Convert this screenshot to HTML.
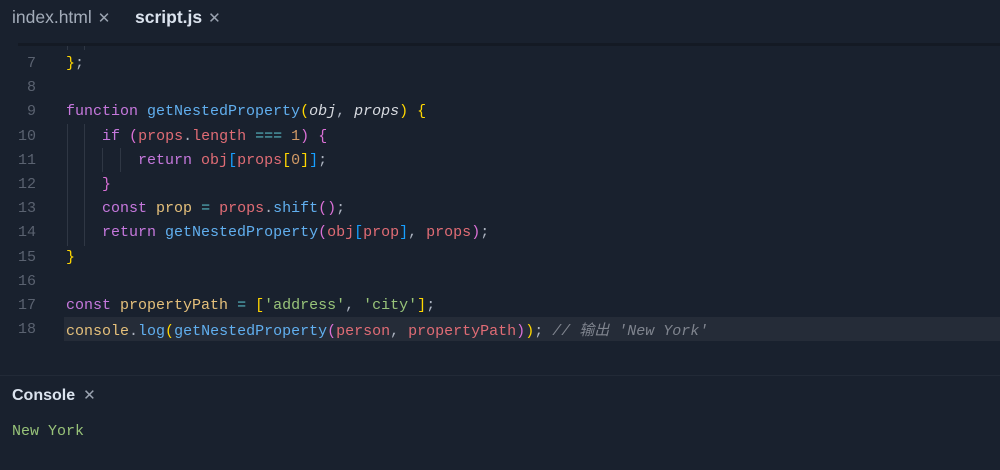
<!DOCTYPE html>
<html><head><meta charset="utf-8"><style>
body{margin:0;width:1000px;height:470px;background:#19212e;overflow:hidden;position:relative;font-family:"Liberation Mono",monospace;}
.tabs{position:absolute;top:0;left:0;width:1000px;height:44px;background:#19212e;font-family:"Liberation Sans",sans-serif;font-size:17.5px;}
.tab{position:absolute;top:7px;}
.x{color:#9aa3b0;font-size:15px;margin-left:6px;}
.shadow{position:absolute;top:43px;left:18px;right:0;height:3px;background:#141a24;}
.ln{position:absolute;left:0;width:36px;text-align:right;color:#5a6270;font-size:15px;line-height:24.2px;}
.code{position:absolute;left:66px;font-size:15px;line-height:24.2px;color:#abb2bf;white-space:pre;}
.row{height:24.2px;}
.g{position:absolute;width:1px;background:#2f3744;}
.k{color:#c678dd}.f{color:#61afef}.p{color:#d7dae0;font-style:italic}.v{color:#e06c75}.c{color:#e5c07b}.n{color:#d19a66}.o{color:#56b6c2}.s{color:#98c379}.cm{color:#7f848e;font-style:italic}
.b1{color:#ffd700}.b2{color:#da70d6}.b3{color:#179fff}
.hl{position:absolute;left:64px;right:0;top:317px;height:24px;background:#252c38;}
.sep{position:absolute;top:375px;left:0;right:0;height:1px;background:#222a37;}
</style></head><body>
<div class="tabs">
<span class="tab" style="left:12px;color:#a3acb9">index.html<span class="x">✕</span></span>
<span class="tab" style="left:135px;color:#dbe3ee;font-weight:bold">script.js<span class="x" style="font-weight:normal">✕</span></span>
</div>
<div class="hl"></div>
<div class="g" style="left:67px;top:46px;height:4px"></div>
<div class="g" style="left:84px;top:46px;height:4px"></div>
<div class="g" style="left:67px;top:124px;height:122px"></div>
<div class="g" style="left:84px;top:124px;height:122px"></div>
<div class="g" style="left:102px;top:148px;height:24px"></div>
<div class="g" style="left:120px;top:148px;height:24px"></div>
<div class="shadow"></div>
<div class="ln" style="top:52px">7<br>8<br>9<br>10<br>11<br>12<br>13<br>14<br>15<br>16<br>17<br>18</div>
<div class="code" style="top:52px"><div class="row"><span class="b1">}</span>;</div><div class="row"> </div><div class="row"><span class="k">function</span> <span class="f">getNestedProperty</span><span class="b1">(</span><span class="p">obj</span>, <span class="p">props</span><span class="b1">)</span> <span class="b1">{</span></div><div class="row">    <span class="k">if</span> <span class="b2">(</span><span class="v">props</span>.<span class="v">length</span> <span class="o">===</span> <span class="n">1</span><span class="b2">)</span> <span class="b2">{</span></div><div class="row">        <span class="k">return</span> <span class="v">obj</span><span class="b3">[</span><span class="v">props</span><span class="b1">[</span><span class="n">0</span><span class="b1">]</span><span class="b3">]</span>;</div><div class="row">    <span class="b2">}</span></div><div class="row">    <span class="k">const</span> <span class="c">prop</span> <span class="o">=</span> <span class="v">props</span>.<span class="f">shift</span><span class="b2">()</span>;</div><div class="row">    <span class="k">return</span> <span class="f">getNestedProperty</span><span class="b2">(</span><span class="v">obj</span><span class="b3">[</span><span class="v">prop</span><span class="b3">]</span>, <span class="v">props</span><span class="b2">)</span>;</div><div class="row"><span class="b1">}</span></div><div class="row"> </div><div class="row"><span class="k">const</span> <span class="c">propertyPath</span> <span class="o">=</span> <span class="b1">[</span><span class="s">'address'</span>, <span class="s">'city'</span><span class="b1">]</span>;</div><div class="row"><span class="c">console</span>.<span class="f">log</span><span class="b1">(</span><span class="f">getNestedProperty</span><span class="b2">(</span><span class="v">person</span>, <span class="v">propertyPath</span><span class="b2">)</span><span class="b1">)</span>; <span class="cm">// <span style="font-family:'Noto Sans CJK SC',sans-serif">输出</span> 'New York'</span></div></div>
<div class="sep"></div>
<div style="position:absolute;top:386px;left:12px;font-family:'Liberation Sans',sans-serif;font-size:16px;font-weight:bold;color:#dbe3ee">Console<span class="x" style="font-weight:normal;margin-left:8px">✕</span></div>
<div style="position:absolute;top:423px;left:12px;font-size:15px;color:#98c379">New York</div>
</body></html>
